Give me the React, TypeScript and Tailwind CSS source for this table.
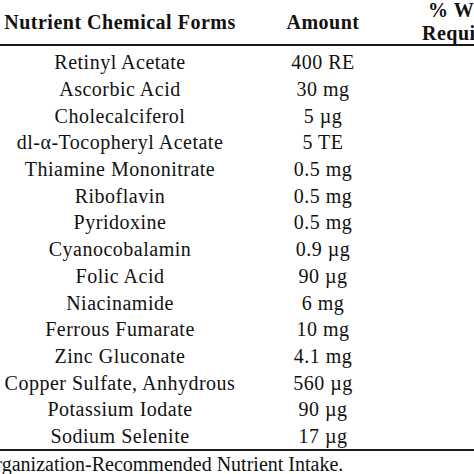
const rows: [string, string][] = [
  ["Retinyl Acetate", "400 RE"],
  ["Ascorbic Acid", "30 mg"],
  ["Cholecalciferol", "5 µg"],
  ["dl-α-Tocopheryl Acetate", "5 TE"],
  ["Thiamine Mononitrate", "0.5 mg"],
  ["Riboflavin", "0.5 mg"],
  ["Pyridoxine", "0.5 mg"],
  ["Cyanocobalamin", "0.9 µg"],
  ["Folic Acid", "90 µg"],
  ["Niacinamide", "6 mg"],
  ["Ferrous Fumarate", "10 mg"],
  ["Zinc Gluconate", "4.1 mg"],
  ["Copper Sulfate, Anhydrous", "560 µg"],
  ["Potassium Iodate", "90 µg"],
  ["Sodium Selenite", "17 µg"],
];

export default function App() {
  return (
    <div className="w-[474px] h-[474px] overflow-hidden bg-white text-[#111] font-['Liberation_Serif',serif] text-[20px] tracking-[0.5px] leading-none">
      <div className="grid grid-cols-[240px_166px_1fr] h-[46px] items-center border-b-2 border-[#1a1a1a] font-bold">
        <div className="text-center -mt-[2px]">Nutrient Chemical Forms</div>
        <div className="text-center -mt-[2px]">Amount</div>
        <div className="flex flex-col whitespace-nowrap leading-[23px] -mt-[1px]">
          <span className="ml-[22px]">% WHO</span>
          <span className="ml-[16px]">Requirement</span>
        </div>
      </div>
      <div className="pt-[3px]">
        {rows.map(([name, amount]) => (
          <div key={name} className="grid grid-cols-[240px_166px_1fr] h-[26.7px] items-center">
            <div className="text-center whitespace-nowrap">{name}</div>
            <div className="text-center whitespace-nowrap">{amount}</div>
            <div />
          </div>
        ))}
      </div>
      <div className="border-t-2 border-[#1a1a1a] pt-[3px] whitespace-nowrap tracking-normal">
        <span className="block -ml-[19px]">Organization-Recommended Nutrient Intake.</span>
      </div>
    </div>
  );
}
